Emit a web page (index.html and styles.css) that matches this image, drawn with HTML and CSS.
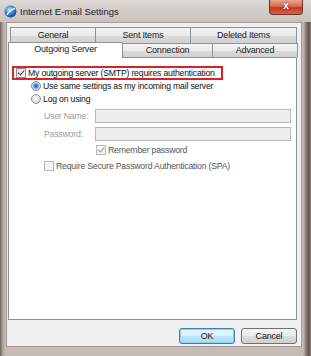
FILE: index.html
```html
<!DOCTYPE html>
<html lang="en">
<head>
    <meta charset="UTF-8">
    <title>Internet E-mail Settings</title>
    <link rel="stylesheet" href="styles.css">
</head>
<body>

    <div class="window">
        <div class="titlebar">
            <svg class="app-icon" width="13" height="13" viewBox="0 0 13 13">
                <defs>
                    <radialGradient id="globe" cx="0.4" cy="0.35" r="0.7">
                        <stop offset="0" stop-color="#bfe3ff"/>
                        <stop offset="0.5" stop-color="#3b86d6"/>
                        <stop offset="1" stop-color="#0d3f8c"/>
                    </radialGradient>
                </defs>
                <circle cx="6.5" cy="6.5" r="6" fill="url(#globe)"/>
                <path d="M3 10 C5 6 8 4 11 3.5" stroke="#f2f2f2" stroke-width="1.6" fill="none"/>
            </svg>
            <span class="title">Internet E-mail Settings</span>
            <div class="close">x</div>
        </div>

        <div class="client">
            <div class="tabrow back">
                <div class="tab w85">General</div>
                <div class="tab w96">Sent Items</div>
                <div class="tab w107">Deleted Items</div>
            </div>
            <div class="tabrow front">
                <div class="tab active w114">Outgoing Server</div>
                <div class="tab w91">Connection</div>
                <div class="tab w85">Advanced</div>
            </div>

            <div class="panel">
                <div class="highlight">
                    <span class="check checked"></span>
                    <span>My outgoing server (SMTP) requires authentication</span>
                </div>

                <div class="row radio-row first">
                    <span class="radio on"></span>
                    <span>Use same settings as my incoming mail server</span>
                </div>
                <div class="row radio-row second">
                    <span class="radio"></span>
                    <span>Log on using</span>
                </div>

                <div class="row field-row user">
                    <label class="field-label">User Name:</label>
                    <input class="field" type="text" disabled>
                </div>
                <div class="row field-row">
                    <label class="field-label">Password:</label>
                    <input class="field" type="password" disabled>
                </div>

                <div class="row remember">
                    <span class="check checked disabled"></span>
                    <span class="dim">Remember password</span>
                </div>
                <div class="row spa">
                    <span class="check disabled"></span>
                    <span class="dim">Require Secure Password Authentication (SPA)</span>
                </div>
            </div>

            <div class="buttons">
                <button class="btn default">OK</button>
                <button class="btn">Cancel</button>
            </div>
        </div>
    </div>

</body>
</html>
```

FILE: styles.css
```css
body {
    margin: 0;
    background: #6f625e;
    font-family: "Liberation Sans", Arial, sans-serif;
}

.window {
    width: 311px;
    height: 356px;
    display: flex;
    flex-direction: column;
    background: linear-gradient(to right, #6e605c 0px, #b3a8a4 3px, #c4bab6 6px, #c4bab6 303px, #8d807c 306px, #5d504c 309px, #9a8e8a 311px);
    white-space: nowrap;
}

.titlebar {
    height: 22px;
    display: flex;
    align-items: center;
    position: relative;
    background: linear-gradient(to bottom, #ded9d6, #cfc8c5 70%, #c9c1bd);
}

.app-icon {
    margin-left: 4px;
    margin-top: 1px;
}

.title {
    margin-left: 3px;
    font-size: 9.5px;
    color: #1a1a1a;
    margin-top: 1px;
}

.close {
    position: absolute;
    top: 0;
    right: 8px;
    width: 34px;
    height: 15px;
    box-sizing: border-box;
    border: 1px solid #6b3328;
    border-top: none;
    border-radius: 0 0 4px 4px;
    background: linear-gradient(to bottom, #e9a594 0%, #d46a52 45%, #c2381f 55%, #d5644b 100%);
    color: #fff;
    font-weight: bold;
    font-size: 10px;
    text-align: center;
    line-height: 12px;
    text-shadow: 0 0 2px #7a1d0e;
}

.client {
    flex: 1;
    margin: 0 9px 9px 6px;
    background: #f0f0f0;
    border: 1px solid #a49a96;
    display: flex;
    flex-direction: column;
    font-size: 8.7px;
    letter-spacing: -0.2px;
    color: #111;
}

.tabrow {
    display: flex;
    padding-left: 3px;
}

.tabrow.back {
    margin-top: 4px;
    height: 16px;
}

.tabrow.front {
    height: 14px;
    position: relative;
    z-index: 1;
}

.tab {
    box-sizing: border-box;
    border: 1px solid #8d929b;
    border-bottom: none;
    margin-left: -1px;
    background: linear-gradient(to bottom, #f4f4f4, #eaeaea 50%, #dadada 52%, #d2d2d2);
    text-align: center;
    font-size: 9px;
    line-height: 15px;
    color: #222;
}

.tab:first-child {
    margin-left: 0;
}

.tab.active {
    background: #fff;
    margin-top: -1px;
    height: 16px;
    margin-left: -2px;
    line-height: 15px;
}

.tab.active + .tab {
    margin-left: -1px;
}

.tabrow.front .tab {
    line-height: 13px;
}

.w85 { width: 86px; }
.w96 { width: 96px; }
.w107 { width: 107px; }
.w114 { width: 115px; }
.w91 { width: 91px; }

.panel {
    height: 263px;
    box-sizing: border-box;
    margin: 0 4px 0 1px;
    background: #fff;
    border: 1px solid #8d929b;
    display: flex;
    flex-direction: column;
}

.highlight {
    margin: 8px 0 0 3px;
    width: 211px;
    height: 14px;
    box-sizing: border-box;
    border: 2px solid #d3232b;
    display: flex;
    align-items: center;
    gap: 2px;
    padding-left: 2px;
}

.row {
    display: flex;
    align-items: center;
}

.radio-row {
    height: 12px;
    margin-left: 22px;
    gap: 2px;
}

.radio-row.second {
    margin-top: 1px;
}

.check {
    width: 10px;
    height: 10px;
    box-sizing: border-box;
    border: 1px solid #8e8f8f;
    background: linear-gradient(135deg, #dcdcdc, #fafafa);
    position: relative;
    flex-shrink: 0;
}

.check.checked::after {
    content: "";
    position: absolute;
    left: 2px;
    top: 0px;
    width: 3px;
    height: 5px;
    border: solid #2b467c;
    border-width: 0 1.5px 1.5px 0;
    transform: rotate(40deg);
}

.check.disabled {
    border-color: #b8b8b8;
    background: #f4f4f4;
}

.check.disabled.checked::after {
    border-color: #9a9a9a;
}

.radio {
    width: 10px;
    height: 10px;
    box-sizing: border-box;
    border-radius: 50%;
    border: 1px solid #8a8a8a;
    background: radial-gradient(circle at 40% 40%, #fafafa, #d0d0d0);
    flex-shrink: 0;
}

.radio.on {
    background: radial-gradient(circle, #1d5cc8 0, #4b94e6 2px, #a9cdf2 3px, #e8e8e8 4px);
}

.field-row {
    margin-left: 35px;
    height: 14px;
    margin-top: 4px;
}

.field-label {
    width: 51px;
    color: #9b9b9b;
}

.field {
    width: 196px;
    height: 14px;
    box-sizing: border-box;
    border: 1px solid #b5b9bf;
    background: #eeeeee;
    padding: 0;
    margin: 0;
}

.remember {
    margin: 4px 0 0 87px;
    height: 10px;
    gap: 2px;
}

.spa {
    margin: 5px 0 0 35px;
    height: 12px;
    gap: 2px;
}

.dim {
    color: #555;
}

.buttons {
    display: flex;
    justify-content: flex-end;
    gap: 6px;
    margin: 8px 4px 0 0;
}

.btn {
    width: 56px;
    height: 16px;
    padding: 0;
    border: 1px solid #707070;
    border-radius: 3px;
    background: linear-gradient(to bottom, #f2f2f2, #ebebeb 50%, #dddddd 52%, #cfcfcf);
    font-family: "Liberation Sans", Arial, sans-serif;
    font-size: 9px;
    color: #111;
    letter-spacing: -0.2px;
}

.btn.default {
    border-color: #3c7fb1;
    box-shadow: inset 0 0 0 1px #8fd0f4;
    background: linear-gradient(to bottom, #eaf6fd, #d9f0fc 50%, #bee6fd 52%, #a7d9f5);
}
```
